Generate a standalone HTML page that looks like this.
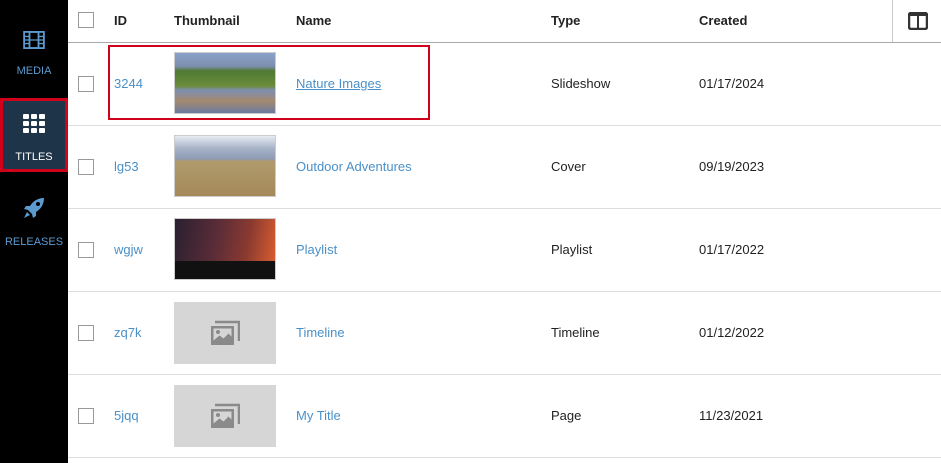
<!DOCTYPE html>
<html><head><meta charset="utf-8"><style>
*{box-sizing:border-box;margin:0;padding:0}
body{width:941px;height:463px;overflow:hidden;background:#fff;font-family:"Liberation Sans",sans-serif;position:relative}
.side{position:absolute;left:0;top:0;width:68px;height:463px;background:#000}
.nav{position:absolute;left:0;width:68px;text-align:center;color:#5b9bd0;font-size:11px}
.nav.act{background:#1e3448;border:3px solid #d0021b;color:#fff;top:98px;height:74px}
.cb{position:absolute;left:78px;width:16px;height:16px;border:1px solid #999;background:#fff}
.t{position:absolute;font-size:13px;color:#222}
.h{font-weight:bold;font-size:13px;top:13px}
.id,.nm{color:#4a90c8}
.line{position:absolute;left:68px;right:0;height:1px;background:#ddd}
.th{position:absolute;left:174px;width:102px;height:62px;border:1px solid #ccc}
.ph{background:#d6d6d6;border:none}
</style></head><body>
<div class="side">
<div class="nav" style="top:31px"><svg width="24" height="18" viewBox="0 0 24 20"><rect x="1" y="1" width="22" height="18" fill="none" stroke="#5b9bd0" stroke-width="2"/><rect x="7" y="1" width="10" height="18" fill="none" stroke="#5b9bd0" stroke-width="2"/><path d="M1 6h6M1 10h6M1 14h6M17 6h6M17 10h6M17 14h6M7 10h10" stroke="#5b9bd0" stroke-width="1.5"/></svg><div style="margin-top:13px">MEDIA</div></div>
<div class="nav act"><svg style="margin-top:13px" width="22" height="20" viewBox="0 0 22 20" fill="#fff"><rect x="0" y="0" width="6" height="5" rx="1"/><rect x="8" y="0" width="6" height="5" rx="1"/><rect x="16" y="0" width="6" height="5" rx="1"/><rect x="0" y="7" width="6" height="5" rx="1"/><rect x="8" y="7" width="6" height="5" rx="1"/><rect x="16" y="7" width="6" height="5" rx="1"/><rect x="0" y="14" width="6" height="5" rx="1"/><rect x="8" y="14" width="6" height="5" rx="1"/><rect x="16" y="14" width="6" height="5" rx="1"/></svg><div style="margin-top:14px">TITLES</div></div>
<div class="nav" style="top:197px"><svg width="22" height="22" viewBox="0 0 22 22" fill="#5b9bd0"><path d="M21 1C15 1 10 4 7 9L3 9 1 12 5 13 9 17 10 21 13 19 13 15C18 12 21 7 21 1Z"/><path d="M4 15L1 21 7 18Z"/><circle cx="15" cy="7" r="2" fill="#000"/></svg><div style="margin-top:14px">RELEASES</div></div>
</div>
<div class="cb" style="top:12px"></div>
<div class="t h" style="left:114px">ID</div>
<div class="t h" style="left:174px">Thumbnail</div>
<div class="t h" style="left:296px">Name</div>
<div class="t h" style="left:551px">Type</div>
<div class="t h" style="left:699px">Created</div>
<div style="position:absolute;left:892px;top:0;width:1px;height:42px;background:#ccc"></div>
<svg style="position:absolute;left:908px;top:12px" width="20" height="18" viewBox="0 0 20 18"><rect x="1" y="1" width="18" height="16" rx="2" fill="none" stroke="#333" stroke-width="2.5"/><path d="M10 2v15" stroke="#333" stroke-width="2"/><rect x="1" y="1" width="18" height="3" fill="#333"/></svg>
<div class="line" style="top:42px;background:#aaa"></div>

<div class="cb" style="top:76px"></div><div class="t id" style="left:114px;top:76px">3244</div>
<div class="th" style="top:52px;background:linear-gradient(#8aa2c8 0%,#7d8fb0 22%,#4f7a32 30%,#6b8c3a 55%,#7e8eb0 62%,#a48a70 80%,#6a7aa0 100%)"></div>
<div class="t nm" style="left:296px;top:76px;text-decoration:underline">Nature Images</div>
<div class="t" style="left:551px;top:76px">Slideshow</div><div class="t" style="left:699px;top:76px">01/17/2024</div>
<div style="position:absolute;left:108px;top:45px;width:322px;height:75px;border:2px solid #d0021b"></div>
<div class="line" style="top:125px"></div>

<div class="cb" style="top:159px"></div><div class="t id" style="left:114px;top:159px">lg53</div>
<div class="th" style="top:135px;background:linear-gradient(#e8ecf2 0%,#a8b4c8 20%,#8c9ab4 38%,#b09a6c 42%,#a48a5a 100%)"></div>
<div class="t nm" style="left:296px;top:159px">Outdoor Adventures</div>
<div class="t" style="left:551px;top:159px">Cover</div><div class="t" style="left:699px;top:159px">09/19/2023</div>
<div class="line" style="top:208px"></div>

<div class="cb" style="top:242px"></div><div class="t id" style="left:114px;top:242px">wgjw</div>
<div class="th" style="top:218px;background:linear-gradient(100deg,#2a2030 0%,#5a2c38 40%,#8a3a30 70%,#e06030 100%)"><div style="position:absolute;left:0;right:0;bottom:0;height:18px;background:#111"></div></div>
<div class="t nm" style="left:296px;top:242px">Playlist</div>
<div class="t" style="left:551px;top:242px">Playlist</div><div class="t" style="left:699px;top:242px">01/17/2022</div>
<div class="line" style="top:291px"></div>

<div class="cb" style="top:325px"></div><div class="t id" style="left:114px;top:325px">zq7k</div>
<div class="th ph" style="top:302px"><svg style="position:absolute;left:36px;top:18px" width="30" height="26" viewBox="0 0 30 26"><path d="M5 2h24v19" fill="none" stroke="#8a8a8a" stroke-width="2.5"/><rect x="1" y="6" width="23" height="19" fill="#8a8a8a"/><rect x="3.5" y="8.5" width="18" height="12" fill="#d6d6d6"/><circle cx="8" cy="12" r="2" fill="#8a8a8a"/><path d="M3.5 20.5l6-5 4 3 5-5 3 3v4z" fill="#8a8a8a"/></svg></div>
<div class="t nm" style="left:296px;top:325px">Timeline</div>
<div class="t" style="left:551px;top:325px">Timeline</div><div class="t" style="left:699px;top:325px">01/12/2022</div>
<div class="line" style="top:374px"></div>

<div class="cb" style="top:408px"></div><div class="t id" style="left:114px;top:408px">5jqq</div>
<div class="th ph" style="top:385px"><svg style="position:absolute;left:36px;top:18px" width="30" height="26" viewBox="0 0 30 26"><path d="M5 2h24v19" fill="none" stroke="#8a8a8a" stroke-width="2.5"/><rect x="1" y="6" width="23" height="19" fill="#8a8a8a"/><rect x="3.5" y="8.5" width="18" height="12" fill="#d6d6d6"/><circle cx="8" cy="12" r="2" fill="#8a8a8a"/><path d="M3.5 20.5l6-5 4 3 5-5 3 3v4z" fill="#8a8a8a"/></svg></div>
<div class="t nm" style="left:296px;top:408px">My Title</div>
<div class="t" style="left:551px;top:408px">Page</div><div class="t" style="left:699px;top:408px">11/23/2021</div>
<div class="line" style="top:457px"></div>
</body></html>
